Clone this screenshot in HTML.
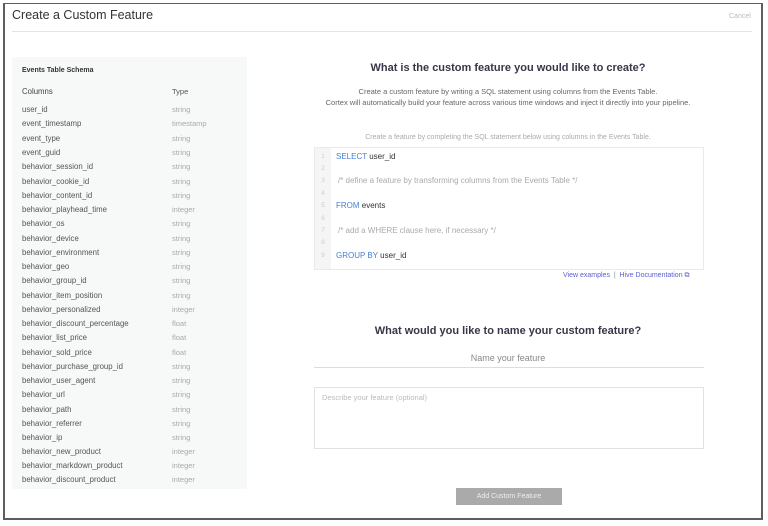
<!DOCTYPE html>
<html><head><meta charset="utf-8"><style>
*{margin:0;padding:0;box-sizing:border-box}
body{width:768px;height:526px;background:#fff;font-family:"Liberation Sans",sans-serif;position:relative;overflow:hidden}
.frame{position:absolute;left:3px;top:3px;width:760px;height:517px;border:2px solid #5e5e5e;border-top-width:1.5px}
.a{position:absolute;white-space:nowrap}
.side{position:absolute;left:12px;top:57px;width:235px;height:432px;background:#f7f8f8}
.row{position:absolute;left:22px;font-size:7.8px;color:#555}
.typ{position:absolute;left:172px;font-size:7.5px;color:#aaa}
.c{position:absolute;left:300px;width:416px;text-align:center;white-space:nowrap}
.ed{position:absolute;left:314px;top:147px;width:390px;height:123px;border:1px solid #eaeaea;background:#fff}
.gut{position:absolute;left:0;top:0;width:16px;height:100%;background:#f5f5f5}
.ln{position:absolute;left:0;width:16px;text-align:center;font-size:6.5px;color:#ccc}
.code{position:absolute;left:21px;font-size:8px;color:#333}
.kw{color:#4a7fcf}.cm{color:#aaa}
</style></head><body>
<div class="frame"></div>
<div class="a" style="left:12px;top:8px;font-size:12.5px;color:#333">Create a Custom Feature</div>
<div class="a" style="left:729px;top:13px;font-size:7px;color:#bbb">Cancel</div>
<div class="a" style="left:12px;top:31px;width:740px;height:1px;background:#e4e4e4"></div>
<div class="side"></div>
<div class="a" style="left:22px;top:67px;font-size:7px;font-weight:bold;color:#333">Events Table Schema</div>
<div class="row" style="top:87px;color:#444">Columns</div><div class="typ" style="top:87px;color:#555">Type</div>
<div class="row" style="top:105px">user_id</div><div class="typ" style="top:105px">string</div>
<div class="row" style="top:119px">event_timestamp</div><div class="typ" style="top:119px">timestamp</div>
<div class="row" style="top:134px">event_type</div><div class="typ" style="top:134px">string</div>
<div class="row" style="top:148px">event_guid</div><div class="typ" style="top:148px">string</div>
<div class="row" style="top:162px">behavior_session_id</div><div class="typ" style="top:162px">string</div>
<div class="row" style="top:177px">behavior_cookie_id</div><div class="typ" style="top:177px">string</div>
<div class="row" style="top:191px">behavior_content_id</div><div class="typ" style="top:191px">string</div>
<div class="row" style="top:205px">behavior_playhead_time</div><div class="typ" style="top:205px">integer</div>
<div class="row" style="top:219px">behavior_os</div><div class="typ" style="top:219px">string</div>
<div class="row" style="top:234px">behavior_device</div><div class="typ" style="top:234px">string</div>
<div class="row" style="top:248px">behavior_environment</div><div class="typ" style="top:248px">string</div>
<div class="row" style="top:262px">behavior_geo</div><div class="typ" style="top:262px">string</div>
<div class="row" style="top:276px">behavior_group_id</div><div class="typ" style="top:276px">string</div>
<div class="row" style="top:291px">behavior_item_position</div><div class="typ" style="top:291px">string</div>
<div class="row" style="top:305px">behavior_personalized</div><div class="typ" style="top:305px">integer</div>
<div class="row" style="top:319px">behavior_discount_percentage</div><div class="typ" style="top:319px">float</div>
<div class="row" style="top:333px">behavior_list_price</div><div class="typ" style="top:333px">float</div>
<div class="row" style="top:348px">behavior_sold_price</div><div class="typ" style="top:348px">float</div>
<div class="row" style="top:362px">behavior_purchase_group_id</div><div class="typ" style="top:362px">string</div>
<div class="row" style="top:376px">behavior_user_agent</div><div class="typ" style="top:376px">string</div>
<div class="row" style="top:390px">behavior_url</div><div class="typ" style="top:390px">string</div>
<div class="row" style="top:405px">behavior_path</div><div class="typ" style="top:405px">string</div>
<div class="row" style="top:419px">behavior_referrer</div><div class="typ" style="top:419px">string</div>
<div class="row" style="top:433px">behavior_ip</div><div class="typ" style="top:433px">string</div>
<div class="row" style="top:447px">behavior_new_product</div><div class="typ" style="top:447px">integer</div>
<div class="row" style="top:461px">behavior_markdown_product</div><div class="typ" style="top:461px">integer</div>
<div class="row" style="top:475px">behavior_discount_product</div><div class="typ" style="top:475px">integer</div>

<div class="c" style="top:62px;font-size:11px;font-weight:bold;color:#3a3548">What is the custom feature you would like to create?</div>
<div class="c" style="top:87px;font-size:7.5px;color:#666">Create a custom feature by writing a SQL statement using columns from the Events Table.</div>
<div class="c" style="top:98px;font-size:7.5px;color:#666">Cortex will automatically build your feature across various time windows and inject it directly into your pipeline.</div>
<div class="c" style="top:134px;font-size:7px;color:#aaa">Create a feature by completing the SQL statement below using columns in the Events Table.</div>
<div class="ed"><div class="gut"></div>
<div class="ln" style="top:5px">1</div><div class="ln" style="top:17px">2</div><div class="ln" style="top:29px">3</div><div class="ln" style="top:42px">4</div><div class="ln" style="top:54px">5</div><div class="ln" style="top:67px">6</div><div class="ln" style="top:79px">7</div><div class="ln" style="top:91px">8</div><div class="ln" style="top:104px">9</div>
<div class="code" style="top:4px"><span class="kw">SELECT</span> user_id</div>
<div class="code cm" style="top:28px;left:23px">/* define a feature by transforming columns from the Events Table */</div>
<div class="code" style="top:53px"><span class="kw">FROM</span> events</div>
<div class="code cm" style="top:78px;left:23px">/* add a WHERE clause here, if necessary */</div>
<div class="code" style="top:103px"><span class="kw">GROUP BY</span> user_id</div>
</div>
<div class="a" style="left:563px;top:272px;font-size:7px;color:#5a5fd0">View examples &nbsp;<span style="color:#888">|</span>&nbsp; Hive Documentation <span style="font-size:7px">⧉</span></div>
<div class="c" style="top:325px;font-size:11px;font-weight:bold;color:#3a3548">What would you like to name your custom feature?</div>
<div class="c" style="top:353px;font-size:9px;color:#888">Name your feature</div>
<div class="a" style="left:314px;top:367px;width:390px;height:1px;background:#ddd"></div>
<div class="a" style="left:314px;top:387px;width:390px;height:62px;border:1px solid #e2e2e2"></div>
<div class="a" style="left:322px;top:393px;font-size:7.5px;color:#bbb">Describe your feature (optional)</div>
<div class="a" style="left:456px;top:488px;width:106px;height:17px;background:#aaa;color:#eee;font-size:7px;text-align:center;line-height:17px">Add Custom Feature</div>
</body></html>
